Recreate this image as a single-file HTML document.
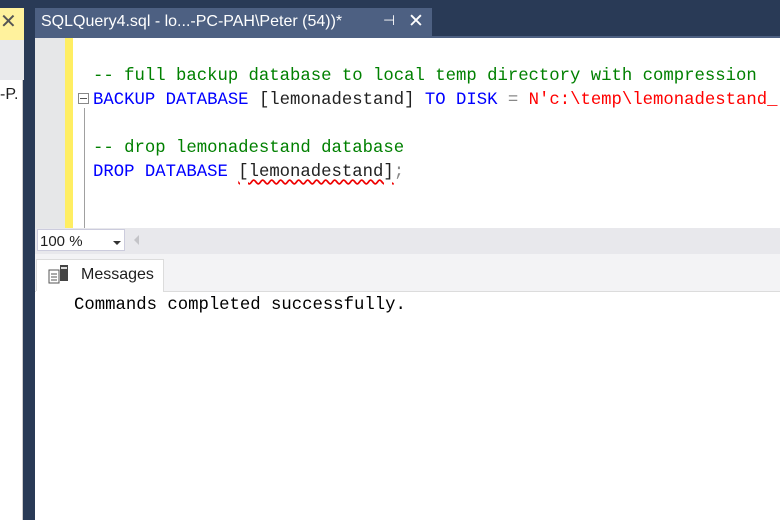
<!DOCTYPE html>
<html><head><style>
*{margin:0;padding:0;box-sizing:border-box}
body{width:780px;height:520px;background:#293a56;position:relative;overflow:hidden;font-family:"Liberation Sans",sans-serif}
.a{position:absolute}
.code{font-family:"Liberation Mono",monospace;font-size:17.3px;white-space:pre;line-height:24px}
</style></head><body>
<div class="a" style="left:0;top:8px;width:24px;height:32px;background:#fff29d"></div>
<div class="a" style="left:0;top:12px;width:24px;font-size:20px;color:#555;line-height:20px">✕</div>
<div class="a" style="left:0;top:40px;width:24px;height:40px;background:#e8e9ec"></div>
<div class="a" style="left:0;top:80px;width:23px;height:440px;background:#fff;border-right:1px solid #ccc"></div>
<div class="a" style="left:0;top:86px;font-size:16px;color:#1e1e1e">-P.</div>
<div class="a" style="left:35px;top:8px;width:397px;height:28px;background:#4d6082"></div>
<div class="a" style="left:35px;top:36px;width:745px;height:2px;background:#4d6082"></div>
<div class="a" style="left:41px;top:13px;font-size:16px;color:#fff;white-space:nowrap">SQLQuery4.sql - lo...-PC-PAH\Peter (54))*</div>
<div class="a" style="left:383px;top:12px;font-size:14px;color:#fff">⊣</div>
<div class="a" style="left:408px;top:10px;font-size:19px;color:#fff">✕</div>
<div class="a" style="left:35px;top:38px;width:745px;height:190px;background:#fff"></div>
<div class="a" style="left:35px;top:38px;width:30px;height:190px;background:#e6e7e8"></div>
<div class="a" style="left:65px;top:38px;width:8px;height:190px;background:#ffee62"></div>
<div class="a" style="left:84px;top:108px;width:1px;height:120px;background:#a0a0a0"></div>
<div class="a" style="left:78px;top:93px;width:11px;height:11px;border:1px solid #888;background:#fff"></div>
<div class="a" style="left:80px;top:98px;width:7px;height:1px;background:#555"></div>
<div class="a code" style="left:93px;top:65px"><span style="color:#008000">-- full backup database to local temp directory with compression</span>
<span style="color:#0000ff">BACKUP DATABASE</span> <span style="color:#222">[lemonadestand]</span> <span style="color:#0000ff">TO DISK</span> <span style="color:#888">=</span> <span style="color:#f00">N'c:\temp\lemonadestand_</span>

<span style="color:#008000">-- drop lemonadestand database</span>
<span style="color:#0000ff">DROP DATABASE</span> <span style="color:#222;text-decoration:underline wavy #e00;text-underline-offset:3px">[lemonadestand]</span><span style="color:#888">;</span></div>
<div class="a" style="left:35px;top:228px;width:745px;height:26px;background:#e8e8ec"></div>
<div class="a" style="left:37px;top:229px;width:88px;height:22px;background:#fff;border:1px solid #ccd"></div>
<div class="a" style="left:40px;top:233px;font-size:15px;color:#1e1e1e">100 %</div>
<div class="a" style="left:113px;top:241px;border-left:4px solid transparent;border-right:4px solid transparent;border-top:4px solid #333"></div>
<div class="a" style="left:134px;top:235px;border-top:5px solid transparent;border-bottom:5px solid transparent;border-right:5px solid #c4c4c8"></div>
<div class="a" style="left:35px;top:254px;width:745px;height:266px;background:#f3f3f5"></div>
<div class="a" style="left:36px;top:259px;width:128px;height:34px;background:#fff;border:1px solid #dcdcdc;border-bottom:none"></div>
<div class="a" style="left:35px;top:291px;width:745px;height:229px;background:#fff;border-top:1px solid #dcdcdc"></div>
<div class="a" style="left:36px;top:291px;width:127px;height:2px;background:#fff"></div>
<svg class="a" style="left:48px;top:264px" width="24" height="22"><rect x="1" y="6" width="10" height="13" fill="#fff" stroke="#555"/><path d="M3 10h6M3 13h6M3 16h6" stroke="#555"/><rect x="12" y="1" width="8" height="16" fill="#444"/><rect x="13" y="3" width="6" height="2" fill="#ddd"/></svg>
<div class="a" style="left:81px;top:266px;font-size:16px;color:#1e1e1e">Messages</div>
<div class="a" style="left:74px;top:296px;font-family:'Liberation Mono',monospace;font-size:17.3px;color:#000;white-space:pre">Commands completed successfully.</div>
</body></html>
